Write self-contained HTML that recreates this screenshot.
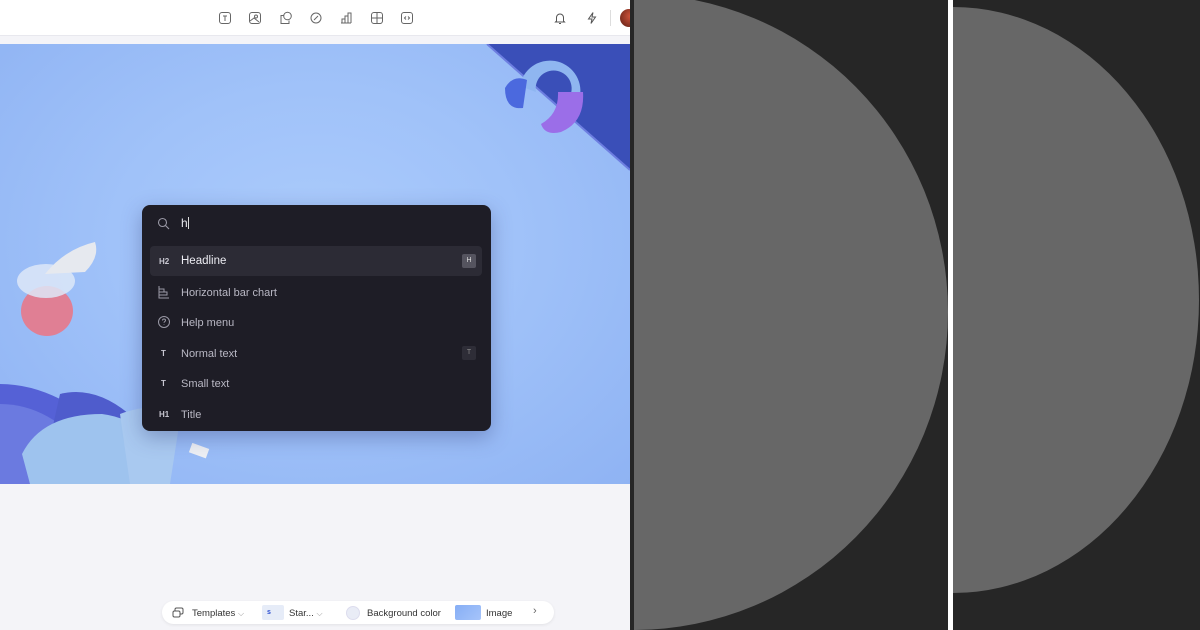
<!DOCTYPE html>
<html><head><meta charset="utf-8"><style>
*{margin:0;padding:0;box-sizing:border-box}
body{width:1200px;height:630px;overflow:hidden;background:#262626;font-family:"Liberation Sans",sans-serif;position:relative}
.left{position:absolute;left:0;top:0;width:630px;height:630px;background:#f4f4f8}
.top{position:absolute;left:0;top:0;width:630px;height:36px;background:#fff;border-bottom:1px solid #e8e8ee}
.ic{position:absolute;top:11px;width:14px;height:14px}
.canvas{position:absolute;left:0;top:44px;width:630px;height:440px;overflow:hidden;background:radial-gradient(ellipse at 50% 45%,#abcbfb 0%,#a0c2f9 45%,#8fb3f3 100%)}
.pop{position:absolute;left:142px;top:205px;width:349px;height:226px;background:#1e1d26;border-radius:8px;box-shadow:0 6px 20px rgba(40,50,110,.35);color:#b9b8c4;font-size:11px}
.row{position:absolute;left:8px;width:332px;height:30px;border-radius:4px}
.row .t{position:absolute;left:31px;top:10px}
.row .i{position:absolute;left:9px;top:11px;font-size:8px;font-weight:bold;color:#c9c8d2}
.kb{position:absolute;right:6px;top:8px;width:14px;height:14px;border-radius:2px;font-size:7px;text-align:center;line-height:14px}
.bar{position:absolute;left:162px;top:601px;width:392px;height:23px;background:#fff;border-radius:12px;box-shadow:0 1px 3px rgba(0,0,0,.08);font-size:9.5px;color:#333}
.bar span{position:absolute;top:7px}
</style></head><body>
<div class="left">
<div class="top">
<svg class="ic" style="left:218px" viewBox="0 0 14 14" fill="none" stroke="#666" stroke-width="1"><rect x="1.5" y="1.5" width="11" height="11" rx="2.5"/><path d="M5 5h4M7 5v5"/></svg>
<svg class="ic" style="left:248px" viewBox="0 0 14 14" fill="none" stroke="#666" stroke-width="1"><rect x="1.5" y="1.5" width="11" height="11" rx="2.5"/><circle cx="8" cy="5.5" r="1.5"/><path d="M2 10l4-3 5 4"/></svg>
<svg class="ic" style="left:279px" viewBox="0 0 14 14" fill="none" stroke="#666" stroke-width="1"><circle cx="8.5" cy="5" r="3.8"/><path d="M4.5 4.5H2v8h8v-3"/></svg>
<svg class="ic" style="left:309px" viewBox="0 0 14 14" fill="none" stroke="#666" stroke-width="1"><circle cx="7" cy="7" r="5"/><path d="M5 9l4-4"/></svg>
<svg class="ic" style="left:339px" viewBox="0 0 14 14" fill="none" stroke="#666" stroke-width="1"><path d="M2 12h10M3 12V8h3v4M6 12V5h3v7M9 12V2h3v10"/></svg>
<svg class="ic" style="left:370px" viewBox="0 0 14 14" fill="none" stroke="#666" stroke-width="1"><rect x="1.5" y="1.5" width="11" height="11" rx="2.5"/><path d="M1.5 7h11M7 1.5v11"/></svg>
<svg class="ic" style="left:400px" viewBox="0 0 14 14" fill="none" stroke="#666" stroke-width="1"><rect x="1.5" y="1.5" width="11" height="11" rx="2.5"/><path d="M6 5.5L4.5 7 6 8.5M8 5.5L9.5 7 8 8.5"/></svg>
<svg class="ic" style="left:553px" viewBox="0 0 14 14" fill="none" stroke="#555" stroke-width="1"><path d="M3.5 10V6.5a3.5 3.5 0 017 0V10l1 1h-9zM6 12.5h2"/></svg>
<svg class="ic" style="left:585px" viewBox="0 0 14 14" fill="none" stroke="#555" stroke-width="1"><path d="M8 1.5L3.5 8H7l-1 4.5L10.5 6H7z"/></svg>
<div style="position:absolute;left:610px;top:10px;width:1px;height:16px;background:#ddd"></div>
<div style="position:absolute;left:620px;top:9px;width:18px;height:18px;border-radius:50%;background:radial-gradient(circle at 60% 40%,#d4553c,#5a1e14)"></div>
</div>
<div class="canvas">
<svg width="630" height="440" style="position:absolute;left:0;top:0">
<polygon points="487,0 630,0 630,126" fill="#3a4fb8"/>
<line x1="487" y1="0" x2="630" y2="126" stroke="#6d7ee0" stroke-width="2"/>
<path d="M520 42 a30 30 0 1 1 60 10 l-10 0 a18 18 0 1 0 -34 -4z" fill="#8fb6f0"/>
<path d="M558 48 h25 q2 30 -22 40 q-16 4 -20 -8 q18 -10 17 -32z" fill="#9b6ee8"/>
<path d="M505 44 q8 -14 22 -8 l-4 28 q-18 2 -18 -20z" fill="#4b69de"/>
<ellipse cx="47" cy="267" rx="26" ry="25" fill="#e07f94"/>
<ellipse cx="46" cy="237" rx="29" ry="17" fill="#dde8f8" opacity=".85"/>
<path d="M45 230 q20 -25 50 -32 q5 15 -10 30 z" fill="#e6e9ef"/>
<path d="M0 340 q60 0 120 60 l0 40 H0z" fill="#5561d6"/>
<path d="M0 360 q50 0 90 50 l0 30 H0z" fill="#6b7ae0"/>
<path d="M60 350 q40 -10 80 30 l10 60 H40z" fill="#4f5ccc"/>
<path d="M22 410 q20 -40 80 -40 q40 5 60 40 l0 30 H30z" fill="#9ec3ee"/>
<path d="M120 370 q40 -15 60 5 l-10 65 h-40z" fill="#a9c9f0"/>
<rect x="190" y="402" width="18" height="10" fill="#eef0f4" transform="rotate(20 200 407)"/>
</svg>
<div class="pop" style="top:161px">
<svg style="position:absolute;left:15px;top:12px" width="13" height="13" viewBox="0 0 13 13" fill="none" stroke="#9a99a6" stroke-width="1.1"><circle cx="5.5" cy="5.5" r="4"/><path d="M8.5 8.5l3.5 3.5"/></svg>
<div style="position:absolute;left:39px;top:11px;color:#e6e6ec;font-size:12px">h<span style="display:inline-block;width:1px;height:12px;background:#ddd;vertical-align:-2px"></span></div>
<div class="row" style="top:41px;background:#2c2b35"><span class="i">H2</span><span class="t" style="color:#ececf2;font-size:11.5px;top:9px">Headline</span><span class="kb" style="background:#55545f;color:#ddd">H</span></div>
<div class="row" style="top:72px"><svg class="i" style="top:8px;left:7px" width="14" height="14" viewBox="0 0 14 14" fill="none" stroke="#9a99a6"><path d="M2 1v12h10M2 4h5v3H2M2 7h8v3H2"/></svg><span class="t">Horizontal bar chart</span></div>
<div class="row" style="top:102px"><svg class="i" style="top:8px;left:7px" width="14" height="14" viewBox="0 0 14 14" fill="none" stroke="#9a99a6"><circle cx="7" cy="7" r="5.5"/><path d="M5.5 5.5a1.5 1.5 0 113 0c0 1-1.5 1-1.5 2.3M7 9.5v.5"/></svg><span class="t">Help menu</span></div>
<div class="row" style="top:133px"><span class="i" style="left:11px">T</span><span class="t">Normal text</span><span class="kb" style="background:#2e2d37;color:#888">T</span></div>
<div class="row" style="top:163px"><span class="i" style="left:11px">T</span><span class="t">Small text</span></div>
<div class="row" style="top:194px"><span class="i">H1</span><span class="t">Title</span></div>
</div>
</div>
<div class="bar">
<svg style="position:absolute;left:10px;top:5px" width="13" height="13" viewBox="0 0 13 13" fill="none" stroke="#555"><rect x="1" y="5" width="7" height="6" rx="1.5"/><path d="M3 5V3.5A1.5 1.5 0 014.5 2h5A1.5 1.5 0 0111 3.5v3A1.5 1.5 0 019.5 8H8"/></svg>
<span style="left:30px">Templates <span style="position:static;color:#999;font-size:8px">⌵</span></span>
<div style="position:absolute;left:100px;top:4px;width:22px;height:15px;background:#e6ecf8;border-radius:2px;font-size:7px;color:#2c4ed0;font-weight:bold;padding:4px 0 0 5px">s</div>
<span style="left:127px">Star... <span style="position:static;color:#999;font-size:8px">⌵</span></span>
<div style="position:absolute;left:184px;top:5px;width:14px;height:14px;border-radius:50%;background:#e9ecf6;border:1px solid #dde"></div>
<span style="left:205px">Background color</span>
<div style="position:absolute;left:293px;top:4px;width:26px;height:15px;background:linear-gradient(135deg,#86aef5,#a6c4fa);border-radius:2px"></div>
<span style="left:324px">Image</span>
<span style="left:371px;color:#666;font-size:11px;top:4px">›</span>
</div>
</div>
<svg width="570" height="630" style="position:absolute;left:630px;top:0">
<rect x="0" y="0" width="570" height="630" fill="#262626"/>
<ellipse cx="4" cy="312" rx="314" ry="318" fill="#676767"/>
<rect x="0" y="0" width="4" height="630" fill="#262626"/>
<rect x="318" y="0" width="5" height="630" fill="#fff"/>
<clipPath id="c"><rect x="323" y="0" width="247" height="630"/></clipPath>
<ellipse cx="323" cy="300" rx="246" ry="293" fill="#676767" clip-path="url(#c)"/>
</svg>
</body></html>
